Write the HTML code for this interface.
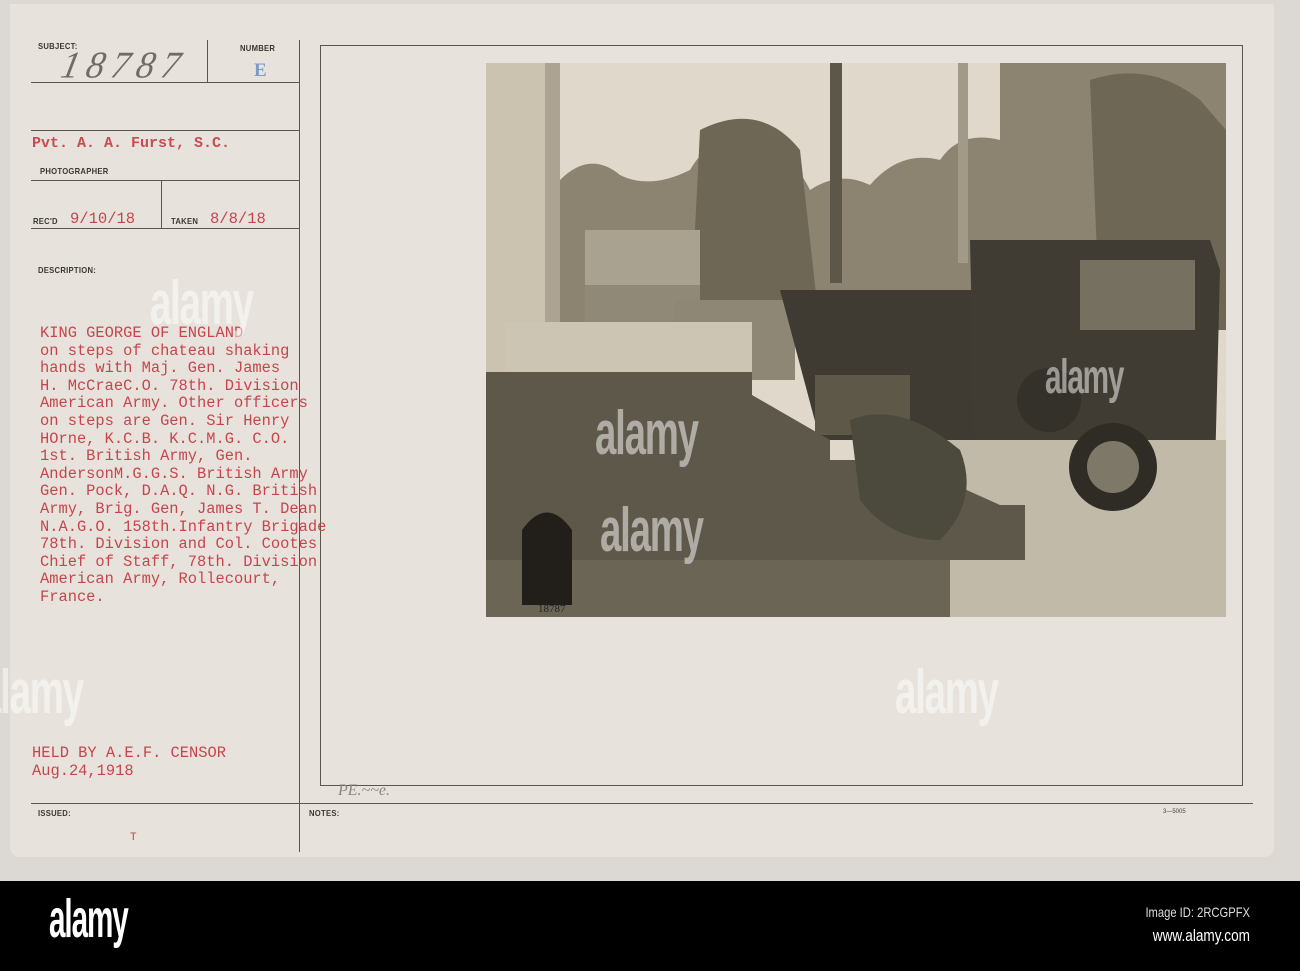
<!DOCTYPE html>
<html><head><meta charset="utf-8"><style>
*{margin:0;padding:0;box-sizing:border-box}
body{width:1300px;height:971px;background:#dcd8d4;position:relative;overflow:hidden;font-family:"Liberation Sans",sans-serif}
.card{position:absolute;left:10px;top:4px;width:1264px;height:853px;background:#e7e3dc;border-radius:2px 2px 10px 10px}
.a{position:absolute}
.h{position:absolute;height:1px;background:#5a5650}
.v{position:absolute;width:1px;background:#5a5650}
.lbl{position:absolute;font-size:8.5px;font-weight:bold;color:#3a3834;letter-spacing:.3px;transform:scaleX(.9);transform-origin:left}
.red{position:absolute;font-family:"Liberation Mono",monospace;color:#c6454c;white-space:pre}
.desc{left:40px;top:325px;font-size:15.4px;line-height:17.6px}
.wm{position:absolute;font-family:"Liberation Sans",sans-serif;font-weight:bold;color:rgba(255,255,255,.5);transform:scaleX(.62);transform-origin:left;letter-spacing:-2px}
.bar{position:absolute;left:0;top:881px;width:1300px;height:90px;background:#000}
</style></head><body>
<div class="card"></div>
<div class="v" style="left:299px;top:40px;height:812px"></div>
<div class="v" style="left:207px;top:40px;height:42px"></div>
<div class="h" style="left:31px;top:82px;width:268px"></div>
<div class="h" style="left:31px;top:130px;width:268px"></div>
<div class="h" style="left:31px;top:180px;width:268px"></div>
<div class="v" style="left:161px;top:180px;height:48px"></div>
<div class="h" style="left:31px;top:228px;width:268px"></div>
<div class="a" style="left:320px;top:45px;width:923px;height:741px;border:1px solid #5a5650"></div>
<div class="h" style="left:31px;top:803px;width:1222px"></div>

<div class="lbl" style="left:38px;top:41px">SUBJECT:</div>
<div class="lbl" style="left:240px;top:43px">NUMBER</div>
<div class="a" style="left:62px;top:44px;font-family:'Liberation Serif',serif;font-style:italic;font-size:36px;color:#5a5854;letter-spacing:7px;transform:skewX(-12deg) scaleY(1.05);font-weight:normal;opacity:.85">18787</div>
<div class="a" style="left:254px;top:60px;font-family:'Liberation Serif',serif;font-size:19px;color:#7a9cc4;font-weight:bold">E</div>
<div class="red" style="left:32px;top:135px;font-size:15px;font-weight:bold;color:#c94a50">Pvt. A. A. Furst, S.C.</div>
<div class="lbl" style="left:40px;top:166px">PHOTOGRAPHER</div>
<div class="lbl" style="left:33px;top:216px">REC'D</div>
<div class="red" style="left:70px;top:210px;font-size:15.5px">9/10/18</div>
<div class="lbl" style="left:171px;top:216px">TAKEN</div>
<div class="red" style="left:210px;top:210px;font-size:15.5px">8/8/18</div>
<div class="lbl" style="left:38px;top:265px">DESCRIPTION:</div>
<div class="red desc">KING GEORGE OF ENGLAND
on steps of chateau shaking
hands with Maj. Gen. James
H. McCraeC.O. 78th. Division
American Army. Other officers
on steps are Gen. Sir Henry
HOrne, K.C.B. K.C.M.G. C.O.
1st. British Army, Gen.
AndersonM.G.G.S. British Army
Gen. Pock, D.A.Q. N.G. British
Army, Brig. Gen, James T. Dean
N.A.G.O. 158th.Infantry Brigade
78th. Division and Col. Cootes
Chief of Staff, 78th. Division
American Army, Rollecourt,
France.</div>
<div class="red" style="left:32px;top:744px;font-size:15.4px;line-height:18px">HELD BY A.E.F. CENSOR
Aug.24,1918</div>
<div class="lbl" style="left:38px;top:808px">ISSUED:</div>
<div class="lbl" style="left:309px;top:808px">NOTES:</div>
<div class="a" style="left:130px;top:832px;font-size:11px;color:#c6454c;font-family:'Liberation Mono',monospace">T</div>
<div class="a" style="left:338px;top:782px;font-size:16px;color:#8a8680;font-family:'Liberation Serif',serif;font-style:italic">PE.~~e.</div>
<div class="a" style="left:1163px;top:809px;font-size:6px;color:#444">3—5005</div>

<svg class="a" style="left:486px;top:63px" width="740" height="554" viewBox="486 63 740 554">
<rect x="486" y="63" width="740" height="554" fill="#e0d9cb"/>
<path d="M560 180 Q590 150 620 175 Q650 190 690 170 Q720 120 760 145 Q790 150 810 190 Q840 170 870 185 Q900 150 940 160 Q960 130 1000 140 L1000 63 L1226 63 L1226 330 L560 330Z" fill="#8c8471"/>
<path d="M700 130 Q760 100 800 150 L820 330 L690 330Z" fill="#6e6755"/>
<path d="M1090 80 Q1150 60 1200 100 L1226 130 L1226 330 L1100 330Z" fill="#6e6755"/>
<rect x="830" y="63" width="12" height="220" fill="#5d5749"/>
<rect x="958" y="63" width="10" height="200" fill="#a29a88"/>
<rect x="585" y="230" width="115" height="90" fill="#aaa290"/>
<rect x="585" y="285" width="115" height="40" fill="#918977"/>
<rect x="486" y="63" width="72" height="320" fill="#cbc2af"/>
<rect x="545" y="63" width="15" height="320" fill="#aca392"/>
<rect x="675" y="300" width="120" height="80" fill="#8e8776"/>
<rect x="505" y="322" width="247" height="50" fill="#cdc5b3"/>
<path d="M780 290 L1000 290 L1000 440 L820 440 Z" fill="#3f3b33"/>
<rect x="815" y="375" width="95" height="60" fill="#5e5848"/>
<path d="M970 240 L1210 240 L1220 270 L1215 470 L1100 520 L975 470 Z" fill="#403c33"/>
<rect x="1080" y="260" width="115" height="70" fill="#767060"/>
<path d="M900 617 L900 440 L1226 440 L1226 617Z" fill="#c2baa8"/>
<circle cx="1049" cy="400" r="32" fill="#34312a"/>
<circle cx="1113" cy="467" r="44" fill="#2f2c26"/><circle cx="1113" cy="467" r="26" fill="#7e7868"/>
<path d="M486 372 L752 372 L752 395 L830 440 L830 460 L900 460 L1000 505 L1025 505 L1025 560 L950 560 L950 617 L486 617Z" fill="#5e584b"/>
<path d="M486 560 L950 560 L950 617 L486 617Z" fill="#6b6555"/>
<path d="M522 605 L522 530 Q547 495 572 530 L572 605Z" fill="#221f1a"/>
<path d="M850 420 Q900 400 960 450 Q980 500 940 540 Q890 540 860 500Z" fill="#4c4a3c"/>
<text x="538" y="612" font-size="11" fill="#222" font-family="Liberation Serif">18787</text>
</svg>

<div class="wm" style="left:150px;top:268px;font-size:62px">alamy</div>
<div class="wm" style="left:600px;top:495px;font-size:62px">alamy</div>
<div class="wm" style="left:895px;top:657px;font-size:62px">alamy</div>
<div class="wm" style="left:-20px;top:657px;font-size:62px">alamy</div>
<div class="wm" style="left:595px;top:398px;font-size:62px">alamy</div>
<div class="wm" style="left:1045px;top:350px;font-size:48px">alamy</div>

<div class="bar"></div>
<div class="a" style="left:49px;top:888px;font-size:54px;font-weight:bold;color:#fff;transform:scaleX(.55);transform-origin:left;letter-spacing:-2px">alamy</div>
<div class="a" style="left:1110px;top:904px;width:140px;text-align:right;font-size:14px;color:#ddd;transform:scaleX(.8);transform-origin:right">Image ID: 2RCGPFX</div>
<div class="a" style="left:1090px;top:926px;width:160px;text-align:right;font-size:17px;color:#fff;transform:scaleX(.8);transform-origin:right">www.alamy.com</div>
</body></html>
